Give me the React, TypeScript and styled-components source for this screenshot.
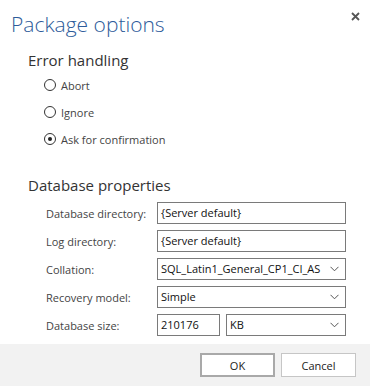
import React from "react";
import styled, { createGlobalStyle } from "styled-components";

const GlobalStyle = createGlobalStyle`
  html, body {
    margin: 0;
    padding: 0;
    background: #fff;
  }
  body {
    font-family: "Open Sans", "Noto Sans", "Liberation Sans", sans-serif;
  }
`;

const Dialog = styled.div`
  width: 370px;
  height: 386px;
  display: flex;
  flex-direction: column;
  background: #fff;
  box-sizing: border-box;
`;

const Header = styled.div`
  display: flex;
  justify-content: space-between;
  align-items: flex-start;
  padding: 7px 10px 0 11px;
`;

const Title = styled.h1`
  margin: 0;
  font-size: 21px;
  font-weight: 300;
  line-height: 34px;
  color: #2d5b9a;
`;

const CloseButton = styled.button`
  border: none;
  background: none;
  padding: 0;
  margin-top: 4px;
  width: 10px;
  height: 10px;
  display: flex;
  align-items: center;
  justify-content: center;
  cursor: pointer;
`;

const Body = styled.div`
  padding: 0 24px 0 28px;
  flex: 1;
`;

const SectionTitle = styled.h2<{ $top: number }>`
  margin: ${({ $top }) => $top}px 0 0;
  font-size: 15px;
  font-weight: 400;
  line-height: 22px;
  color: #333;
`;

const RadioList = styled.div`
  display: flex;
  flex-direction: column;
  gap: 9px;
  margin-top: 5px;
  padding-left: 16px;
`;

const RadioRow = styled.label`
  display: flex;
  align-items: center;
  gap: 5px;
  height: 18px;
  font-size: 11px;
  color: #444;
`;

const RadioCircle = styled.span<{ $checked: boolean }>`
  width: 10px;
  height: 10px;
  border: 1px solid #333;
  border-radius: 50%;
  display: flex;
  align-items: center;
  justify-content: center;

  &::after {
    content: "";
    width: 4px;
    height: 4px;
    border-radius: 50%;
    background: #222;
    display: ${({ $checked }) => ($checked ? "block" : "none")};
  }
`;

const FormGrid = styled.div`
  display: grid;
  grid-template-columns: 111px 189px;
  row-gap: 6px;
  margin-top: 6px;
  padding-left: 18px;
  align-items: center;
`;

const Label = styled.span`
  font-size: 11px;
  color: #444;
`;

const TextBox = styled.div<{ $width?: number }>`
  height: 22px;
  box-sizing: border-box;
  border: 1px solid #7a7a7a;
  padding: 0 3px;
  font-size: 11px;
  line-height: 20px;
  color: #111;
  width: ${({ $width }) => ($width ? `${$width}px` : "auto")};
  background: #fff;
  white-space: nowrap;
`;

const Select = styled(TextBox)`
  display: flex;
  align-items: center;
  justify-content: space-between;
  padding-right: 6px;
  flex: 1;
`;

const Pair = styled.div`
  display: flex;
  gap: 6px;
`;

const Footer = styled.div`
  background: #f2f2f2;
  height: 42px;
  display: flex;
  justify-content: flex-end;
  align-items: center;
  gap: 6px;
  padding-right: 14px;
`;

const Button = styled.button<{ $primary?: boolean }>`
  width: 75px;
  height: 24px;
  box-sizing: border-box;
  background: #fff;
  border: ${({ $primary }) => ($primary ? "2px solid #a9a9a9" : "1px solid #c6c6c6")};
  font-family: inherit;
  font-size: 11px;
  color: #222;
  padding: 0;
`;

const Chevron = () => (
  <svg width="9" height="6" viewBox="0 0 9 6" fill="none">
    <path d="M0.5 0.8 L4.5 4.8 L8.5 0.8" stroke="#555" strokeWidth="1" />
  </svg>
);

const CloseIcon = () => (
  <svg width="9" height="9" viewBox="0 0 9 9">
    <path d="M1 1 L8 8 M8 1 L1 8" stroke="#555" strokeWidth="1.8" />
  </svg>
);

const options = ["Abort", "Ignore", "Ask for confirmation"];

export default function App() {
  return (
    <>
      <GlobalStyle />
      <Dialog>
        <Header>
          <Title>Package options</Title>
          <CloseButton aria-label="Close">
            <CloseIcon />
          </CloseButton>
        </Header>
        <Body>
          <SectionTitle $top={8}>Error handling</SectionTitle>
          <RadioList>
            {options.map((o, i) => (
              <RadioRow key={o}>
                <RadioCircle $checked={i === 2} />
                {o}
              </RadioRow>
            ))}
          </RadioList>
          <SectionTitle $top={26}>Database properties</SectionTitle>
          <FormGrid>
            <Label>Database directory:</Label>
            <TextBox>{"{Server default}"}</TextBox>
            <Label>Log directory:</Label>
            <TextBox>{"{Server default}"}</TextBox>
            <Label>Collation:</Label>
            <Select>
              SQL_Latin1_General_CP1_CI_AS
              <Chevron />
            </Select>
            <Label>Recovery model:</Label>
            <Select>
              Simple
              <Chevron />
            </Select>
            <Label>Database size:</Label>
            <Pair>
              <TextBox $width={63}>210176</TextBox>
              <Select>
                KB
                <Chevron />
              </Select>
            </Pair>
          </FormGrid>
        </Body>
        <Footer>
          <Button $primary>OK</Button>
          <Button>Cancel</Button>
        </Footer>
      </Dialog>
    </>
  );
}
